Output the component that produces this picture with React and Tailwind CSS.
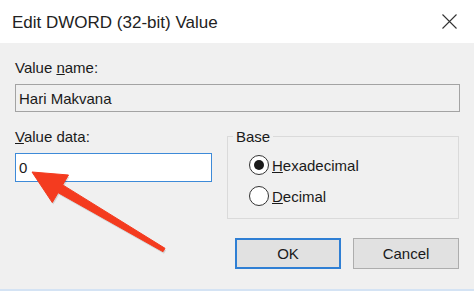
import React from 'react'

const FONT = "font-['Liberation_Sans','Arial',sans-serif]"

function Radio({ checked, children }) {
  return (
    <div className="flex items-center h-[20px]">
      <span className="w-[20px] h-[20px] rounded-full border border-[#333] bg-white flex items-center justify-center">
        {checked && <span className="w-[10px] h-[10px] rounded-full bg-[#1a1a1a]" />}
      </span>
      <span className="ml-[3px] text-[15px] leading-[17px]">{children}</span>
    </div>
  )
}

function Arrow() {
  // red annotation arrow pointing at the Value data box
  return (
    <svg className="absolute left-0 top-0 pointer-events-none" width="474" height="291" viewBox="0 0 474 291">
      <polygon
        points="33,174 69.5,177 63.7,186.9 166,250.3 164,253.7 59.1,194.7 53.3,204.6"
        fill="#000" opacity="0.12"
      />
      <polygon
        points="32,172 68.5,175 62.7,184.9 165,248.3 163,251.7 58.1,192.7 52.3,202.6"
        fill="#f43b1f" stroke="#f43b1f" strokeWidth="1" strokeLinejoin="round"
      />
    </svg>
  )
}

export default function App() {
  return (
    <div className={`relative w-[474px] h-[291px] overflow-hidden bg-[#f0f0f0] text-[#1a1a1a] border-b-2 border-[#d4e3f4] ${FONT}`}>
      <div className="h-[43px] bg-white flex items-center justify-between pl-[12px] pr-[17px]">
        <span className="text-[17px] leading-[20px] text-[#222] mt-[2px]">Edit DWORD (32-bit) Value</span>
        <svg width="15" height="15" viewBox="0 0 15 15">
          <path d="M0.5 0.5 L14.5 14.5 M14.5 0.5 L0.5 14.5" stroke="#333" strokeWidth="1.1" />
        </svg>
      </div>

      <div className="px-[15px] pt-[16px]">
        <div className="text-[15px] leading-[17px]">Value <span className="underline">n</span>ame:</div>
        <div className="mt-[8px] h-[28px] w-[445px] border border-[#a3a3a3] bg-[#f0f0f0] flex items-center pl-[3px] text-[15px] leading-[17px]">
          Hari Makvana
        </div>

        <div className="flex mt-[16px]">
          <div className="w-[197px]">
            <div className="text-[15px] leading-[17px]"><span className="underline">V</span>alue data:</div>
            <div className="mt-[8px] h-[29px] border border-[#3d8ad8] bg-white flex items-center pl-[3px] text-[15px] leading-[17px]">
              0
            </div>
          </div>
          <fieldset className="ml-[15px] w-[232px] h-[91px] border border-[#dadada] pl-[5px]">
            <legend className="px-[3px] text-[15px] leading-[17px]">Base</legend>
            <div className="pl-[16px] pt-[10px] flex flex-col gap-[11px]">
              <Radio checked><span className="underline">H</span>exadecimal</Radio>
              <Radio><span className="underline">D</span>ecimal</Radio>
            </div>
          </fieldset>
        </div>

        <div className="flex justify-end gap-[12px] mt-[19px]">
          <button className="w-[106px] h-[31px] border-2 border-[#2f7fd4] bg-[#e1e1e1] text-[15px] leading-[17px]">OK</button>
          <button className="w-[106px] h-[31px] border border-[#adadad] bg-[#e1e1e1] text-[15px] leading-[17px]">Cancel</button>
        </div>
      </div>

      <Arrow />
    </div>
  )
}
